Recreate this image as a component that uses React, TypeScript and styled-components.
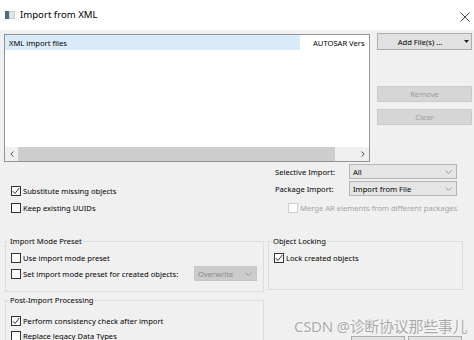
import React from "react";
import styled, { createGlobalStyle } from "styled-components";

const Global = createGlobalStyle`
  html, body { margin: 0; padding: 0; background: #f0f0f0; }
  * { box-sizing: border-box; }
`;

const FONT = `"Noto Sans", "Segoe UI", "DejaVu Sans", sans-serif`;

const Window = styled.div`
  position: relative;
  width: 474px;
  height: 340px;
  overflow: hidden;
  background: #f0f0f0;
  font-family: ${FONT};
  font-size: 7.6px;
  color: #000;
  display: flex;
  flex-direction: column;
`;

const TitleBar = styled.div`
  height: 30px;
  flex: none;
  background: #fff;
  display: flex;
  align-items: center;
  padding: 0 4px 0 5px;
`;

const TitleText = styled.span`
  flex: 1;
  margin-left: 5px;
  font-size: 9.6px;
  line-height: 12px;
`;

const CloseBox = styled.div`
  width: 10px;
  height: 10px;
  margin-top: 3px;
  display: flex;
`;

const Body = styled.div`
  flex: 1;
  padding: 3px 2px 0 4px;
  display: flex;
  flex-direction: column;
`;

const TopRow = styled.div`
  display: flex;
  gap: 7px;
  align-items: flex-start;
`;

const ListBox = styled.div`
  width: 366px;
  height: 128px;
  margin-top: 1px;
  background: #fff;
  border: 1px solid #8f949c;
  display: flex;
  flex-direction: column;
  overflow: hidden;
`;

const Header = styled.div`
  height: 15px;
  flex: none;
  display: flex;
  align-items: center;
  white-space: nowrap;
`;

const HeaderCell = styled.div<{ $w?: number; $hot?: boolean }>`
  height: 100%;
  display: flex;
  align-items: center;
  ${(p) => (p.$w ? `width: ${p.$w}px; flex: none;` : "flex: 1;")}
  padding-left: ${(p) => (p.$hot ? 4 : 13)}px;
  background: ${(p) => (p.$hot ? "#d9ebf9" : "#fff")};
  overflow: hidden;
`;

const ListSpace = styled.div`
  flex: 1;
`;

const HScroll = styled.div`
  height: 14px;
  flex: none;
  display: flex;
  align-items: stretch;
  background: #f0f0f0;
`;

const ScrollArrow = styled.div`
  width: 13px;
  flex: none;
  display: flex;
  align-items: center;
  justify-content: center;
`;

const ScrollThumb = styled.div`
  width: 317px;
  flex: none;
  background: #cdcdcd;
`;

const ScrollTrack = styled.div`
  flex: 1;
`;

const SideCol = styled.div`
  width: 95px;
  display: flex;
  flex-direction: column;
`;

const Button = styled.div<{ $disabled?: boolean; $h?: number; $mt?: number }>`
  height: ${(p) => p.$h ?? 16}px;
  margin-top: ${(p) => p.$mt ?? 0}px;
  display: flex;
  align-items: center;
  justify-content: center;
  background: ${(p) => (p.$disabled ? "#d6d6d6" : "#e1e1e1")};
  border: 1px solid ${(p) => (p.$disabled ? "#cbcbcb" : "#adadad")};
  color: ${(p) => (p.$disabled ? "#9a9a9a" : "#000")};
`;

const SplitLabel = styled.span`
  flex: 1;
  text-align: center;
  padding-left: 1px;
`;

const SplitArrow = styled.span`
  width: 10px;
  flex: none;
  display: flex;
  align-items: center;
  justify-content: center;
`;

const OptionsRow = styled.div`
  display: flex;
  margin-top: 2px;
`;

const LeftOptions = styled.div`
  width: 271px;
  padding: 20px 0 0 7px;
  display: flex;
  flex-direction: column;
  gap: 3px;
`;

const ImportGrid = styled.div`
  display: grid;
  grid-template-columns: 74px 108px;
  row-gap: 2px;
  align-items: center;
`;

const GridLabel = styled.span`
  white-space: nowrap;
`;

const MergeRow = styled.div`
  grid-column: 1 / span 2;
  margin-top: 2px;
  padding-left: 13px;
`;

const Combo = styled.div<{ $disabled?: boolean; $w?: number }>`
  height: 15px;
  ${(p) => (p.$w ? `width: ${p.$w}px;` : "")}
  display: flex;
  align-items: center;
  padding: 0 4px 0 3px;
  background: ${(p) => (p.$disabled ? "#cccccc" : "#e5e5e5")};
  border: 1px solid ${(p) => (p.$disabled ? "#c6c6c6" : "#b4b4b4")};
  color: ${(p) => (p.$disabled ? "#8a8a8a" : "#000")};
`;

const ComboText = styled.span`
  flex: 1;
  white-space: nowrap;
`;

const CheckRow = styled.label<{ $disabled?: boolean }>`
  height: 14px;
  display: flex;
  align-items: center;
  gap: 2px;
  white-space: nowrap;
  color: ${(p) => (p.$disabled ? "#a3a3a3" : "#000")};
`;

const Box = styled.span<{ $disabled?: boolean }>`
  width: 10px;
  height: 10px;
  flex: none;
  background: #fff;
  border: 1px solid ${(p) => (p.$disabled ? "#cfcfcf" : "#333")};
  display: flex;
  align-items: center;
  justify-content: center;
`;

const GroupRow = styled.div<{ $mt: number }>`
  display: flex;
  gap: 4px;
  margin-top: ${(p) => p.$mt}px;
  margin-left: 1px;
  align-items: flex-start;
`;

const Group = styled.fieldset<{ $w: number; $h: number; $pt: number }>`
  margin: 0;
  width: ${(p) => p.$w}px;
  height: ${(p) => p.$h}px;
  flex: none;
  border: 1px solid #dcdcdc;
  padding: ${(p) => p.$pt}px 6px 0 5px;
  display: flex;
  flex-direction: column;
  gap: 1px;
  min-width: 0;
`;

const Legend = styled.legend`
  padding: 0 1px;
  margin-left: -2px;
  line-height: 11px;
`;

const PresetRow = styled.div`
  display: flex;
  align-items: center;
`;

const PushRight = styled.div`
  margin-left: auto;
`;

const ButtonBar = styled.div`
  margin-left: auto;
  margin-right: 10px;
  padding-top: 41px;
  display: flex;
  gap: 3px;
`;

const DialogButton = styled.div`
  width: 54px;
  height: 22px;
  background: #e1e1e1;
  border: 1px solid #adadad;
`;

const Watermark = styled.div`
  position: absolute;
  left: 294px;
  top: 316px;
  font-family: "Noto Sans", "Noto Sans CJK SC", sans-serif;
  font-size: 15px;
  line-height: 20px;
  color: #a8a8a8;
  text-shadow: 0 0 2px #fff, 0 0 1px #fff;
  white-space: nowrap;
  letter-spacing: -0.3px;
`;

const Chevron = () => (
  <svg width="7" height="4" viewBox="0 0 7 4">
    <polyline points="0.5,0.5 3.5,3.5 6.5,0.5" fill="none" stroke="#9a9a9a" strokeWidth="1" />
  </svg>
);

const Check: React.FC<{ checked?: boolean; disabled?: boolean; children: React.ReactNode }> = ({
  checked,
  disabled,
  children,
}) => (
  <CheckRow $disabled={disabled}>
    <Box $disabled={disabled}>
      {checked && (
        <svg width="8" height="8" viewBox="0 0 8 8">
          <polyline points="0.8,4.2 3,6.5 7.3,1" fill="none" stroke="#333" strokeWidth="1" />
        </svg>
      )}
    </Box>
    <span>{children}</span>
  </CheckRow>
);

const AppIcon = () => (
  <svg width="10" height="8" viewBox="0 0 10 8">
    <rect x="0" y="0" width="10" height="8" fill="#c9cccf" />
    <rect x="0" y="0" width="4" height="8" fill="#4d6b78" />
    <rect x="4.5" y="1" width="4.5" height="6" fill="#e2e5e7" />
  </svg>
);

export default function App() {
  return (
    <>
      <Global />
      <Window>
        <TitleBar>
          <AppIcon />
          <TitleText>Import from XML</TitleText>
          <CloseBox>
            <svg width="10" height="10" viewBox="0 0 10 10">
              <path d="M0.5 0.5 L9.5 9.5 M9.5 0.5 L0.5 9.5" stroke="#333" strokeWidth="0.9" />
            </svg>
          </CloseBox>
        </TitleBar>
        <Body>
          <TopRow>
            <ListBox>
              <Header>
                <HeaderCell $w={295} $hot>
                  XML import files
                </HeaderCell>
                <HeaderCell>AUTOSAR Vers</HeaderCell>
              </Header>
              <ListSpace />
              <HScroll>
                <ScrollArrow>
                  <svg width="4" height="6" viewBox="0 0 4 6">
                    <polyline points="3.5,0.5 0.8,3 3.5,5.5" fill="none" stroke="#555" strokeWidth="1" />
                  </svg>
                </ScrollArrow>
                <ScrollThumb />
                <ScrollTrack />
                <ScrollArrow>
                  <svg width="4" height="6" viewBox="0 0 4 6">
                    <polyline points="0.5,0.5 3.2,3 0.5,5.5" fill="none" stroke="#555" strokeWidth="1" />
                  </svg>
                </ScrollArrow>
              </HScroll>
            </ListBox>
            <SideCol>
              <Button $h={17}>
                <SplitLabel>Add File(s) ...</SplitLabel>
                <SplitArrow>
                  <svg width="5" height="3" viewBox="0 0 5 3">
                    <polygon points="0,0 5,0 2.5,3" fill="#222" />
                  </svg>
                </SplitArrow>
              </Button>
              <Button $disabled $mt={36}>
                Remove
              </Button>
              <Button $disabled $mt={7}>
                Clear
              </Button>
            </SideCol>
          </TopRow>

          <OptionsRow>
            <LeftOptions>
              <Check checked>Substitute missing objects</Check>
              <Check>Keep existing UUIDs</Check>
            </LeftOptions>
            <ImportGrid>
              <GridLabel>Selective Import:</GridLabel>
              <Combo>
                <ComboText>All</ComboText>
                <Chevron />
              </Combo>
              <GridLabel>Package Import:</GridLabel>
              <Combo>
                <ComboText>Import from File</ComboText>
                <Chevron />
              </Combo>
              <MergeRow>
                <Check disabled>Merge AR elements from different packages</Check>
              </MergeRow>
            </ImportGrid>
          </OptionsRow>

          <GroupRow $mt={21}>
            <Group $w={259} $h={56} $pt={4}>
              <Legend>Import Mode Preset</Legend>
              <Check>Use import mode preset</Check>
              <PresetRow>
                <Check>Set import mode preset for created objects:</Check>
                <PushRight>
                  <Combo $disabled $w={63}>
                    <ComboText>Overwrite</ComboText>
                    <Chevron />
                  </Combo>
                </PushRight>
              </PresetRow>
            </Group>
            <Group $w={195} $h={54} $pt={4}>
              <Legend>Object Locking</Legend>
              <Check checked>Lock created objects</Check>
            </Group>
          </GroupRow>

          <GroupRow $mt={3}>
            <Group $w={259} $h={80} $pt={8}>
              <Legend>Post-Import Processing</Legend>
              <Check checked>Perform consistency check after import</Check>
              <Check>Replace legacy Data Types</Check>
            </Group>
            <ButtonBar>
              <DialogButton />
              <DialogButton />
            </ButtonBar>
          </GroupRow>
        </Body>
        <Watermark>CSDN @诊断协议那些事儿</Watermark>
      </Window>
    </>
  );
}
